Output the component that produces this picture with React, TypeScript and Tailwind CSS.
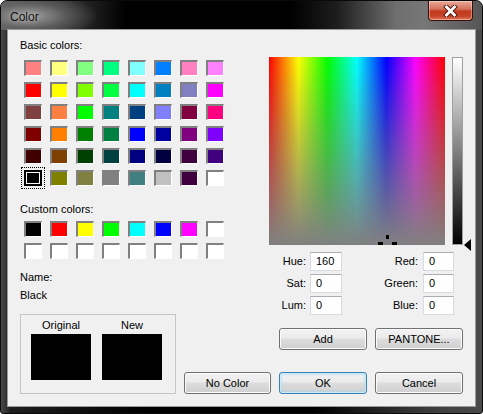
import React from "react";

const basicColors = [
  ["bg-[#ff8080]", "bg-[#ffff80]", "bg-[#80ff80]", "bg-[#00ff80]", "bg-[#80ffff]", "bg-[#0080ff]", "bg-[#ff80c0]", "bg-[#ff80ff]"],
  ["bg-[#ff0000]", "bg-[#ffff00]", "bg-[#80ff00]", "bg-[#00ff40]", "bg-[#00ffff]", "bg-[#0080c0]", "bg-[#8080c0]", "bg-[#ff00ff]"],
  ["bg-[#804040]", "bg-[#ff8040]", "bg-[#00ff00]", "bg-[#008080]", "bg-[#004080]", "bg-[#8080ff]", "bg-[#800040]", "bg-[#ff0080]"],
  ["bg-[#800000]", "bg-[#ff8000]", "bg-[#008000]", "bg-[#008040]", "bg-[#0000ff]", "bg-[#0000a0]", "bg-[#800080]", "bg-[#8000ff]"],
  ["bg-[#400000]", "bg-[#804000]", "bg-[#004000]", "bg-[#004040]", "bg-[#000080]", "bg-[#000040]", "bg-[#400040]", "bg-[#400080]"],
  ["bg-[#000000]", "bg-[#808000]", "bg-[#808040]", "bg-[#808080]", "bg-[#408080]", "bg-[#c0c0c0]", "bg-[#400040]", "bg-[#ffffff]"],
];

const customColors = [
  ["bg-[#000000]", "bg-[#ff0000]", "bg-[#ffff00]", "bg-[#00ff00]", "bg-[#00ffff]", "bg-[#0000ff]", "bg-[#ff00ff]", "bg-[#ffffff]"],
  ["bg-[#ffffff]", "bg-[#ffffff]", "bg-[#ffffff]", "bg-[#ffffff]", "bg-[#ffffff]", "bg-[#ffffff]", "bg-[#ffffff]", "bg-[#ffffff]"],
];

function Swatch({ color, selected }: { color: string; selected?: boolean }) {
  if (selected) {
    return (
      <div className="relative h-[16px] w-[18px]">
        <div className="absolute -inset-[3px] border border-dotted border-black" />
        <div className={`h-full w-full border-2 border-black shadow-[inset_0_0_0_1px_#ffffff] ${color}`} />
      </div>
    );
  }
  return (
    <div
      className={`h-[16px] w-[18px] border-t-2 border-l-2 border-r border-b border-t-[#808080] border-l-[#808080] border-r-white border-b-white ${color}`}
    />
  );
}

function SwatchGrid({ rows, selectFirstOfLast }: { rows: string[][]; selectFirstOfLast?: boolean }) {
  return (
    <div className="ml-[4px] grid grid-cols-[repeat(8,18px)] gap-x-[8px] gap-y-[6px]">
      {rows.map((row, r) =>
        row.map((c, i) => (
          <Swatch key={`${r}-${i}`} color={c} selected={selectFirstOfLast && r === rows.length - 1 && i === 0} />
        ))
      )}
    </div>
  );
}

function Field({ label, value, labelW, boxW }: { label: string; value: string; labelW: string; boxW: string }) {
  return (
    <>
      <div className={`${labelW} text-right leading-[19px]`}>{label}</div>
      <div className={`${boxW} h-[19px] border border-[#d8dbe0] border-t-[#abadb3] bg-white pl-[5px] leading-[17px]`}>
        {value}
      </div>
    </>
  );
}

const btn =
  "flex h-[22px] items-center justify-center rounded-[3px] border bg-[linear-gradient(to_bottom,#f2f2f2_0%,#ebebeb_45%,#dddddd_50%,#cfcfcf_100%)] text-[11px] text-black";

export default function App() {
  return (
    <div className="relative flex h-[414px] w-[483px] flex-col overflow-hidden rounded-t-[7px] rounded-b-[3px] border border-[#0a0a0a] bg-[linear-gradient(to_right,#4a4a4a,#1e1e1e_2%,#000_30%,#000_65%,#3a3a3a_88%,#4a4a4a)] font-['Liberation_Sans',Arial,sans-serif] text-[11px] text-black">
      {/* title bar */}
      <div className="flex h-[29px] items-start justify-between bg-[radial-gradient(ellipse_70px_22px_at_28px_15px,#a0a0a0,rgba(110,110,110,0.6)_55%,transparent_100%),linear-gradient(to_right,#5a5a5a_0%,#3a3a3a_12%,#000_26%,#000_60%,#1e1e1e_70%,#6e6e6e_82%,#777_88%,#555_100%)]">
        <div className="pl-[9px] pt-[9px] text-[12px] leading-[14px] text-[#111] [text-shadow:0_0_5px_rgba(255,255,255,0.55)]">
          Color
        </div>
        <div className="mr-[9px] flex h-[20px] w-[45px] items-center justify-center rounded-b-[4px] border border-t-0 border-[#3c0f0a] bg-[linear-gradient(to_bottom,#e9a898_0%,#d67560_40%,#c23a1e_55%,#c74428_80%,#e07a5c_100%)] shadow-[inset_0_0_0_1px_rgba(255,255,255,0.35)]">
          <svg width="15" height="12" viewBox="0 0 15 12">
            <path d="M3.5 2 L11.5 10 M11.5 2 L3.5 10" stroke="#4a140c" strokeWidth="4.6" strokeLinecap="square" />
            <path d="M3.5 2 L11.5 10 M11.5 2 L3.5 10" stroke="#ffffff" strokeWidth="2.8" strokeLinecap="square" />
          </svg>
        </div>
      </div>

      {/* client area */}
      <div className="mx-[7px] flex h-[376px] flex-col bg-[#f0f0f0] shadow-[0_0_0_1px_#9a9a9a]">
        <div className="flex h-[284px]">
          <div className="w-[228px] pl-[12px] pt-[8px]">
            <div className="leading-[14px]">Basic colors:</div>
            <div className="mt-[8px]">
              <SwatchGrid rows={basicColors} selectFirstOfLast />
            </div>
            <div className="mt-[16px] leading-[14px]">Custom colors:</div>
            <div className="mt-[5px]">
              <SwatchGrid rows={customColors} />
            </div>
            <div className="mt-[11px] leading-[14px]">Name:</div>
            <div className="mt-[4px] leading-[14px]">Black</div>
          </div>

          <div className="ml-[33px] pt-[27px]">
            <div className="flex gap-[7px]">
              <div className="relative h-[188px] w-[176px] bg-[linear-gradient(to_bottom,rgba(128,128,128,0),#808080),linear-gradient(to_right,#ff0000,#ffff00,#00ff00,#00ffff,#0000ff,#ff00ff,#ff0000)]">
                <div className="absolute left-[117px] top-[178px] h-[4px] w-[3px] bg-black" />
                <div className="absolute left-[109px] top-[185px] h-[3px] w-[5px] bg-black" />
                <div className="absolute left-[123px] top-[185px] h-[3px] w-[5px] bg-black" />
              </div>
              <div className="relative h-[188px] w-[11px] border border-[#a0a0a0] bg-[linear-gradient(to_bottom,#ffffff,#000000)]">
                <svg className="absolute left-[11px] top-[181px]" width="8" height="12" viewBox="0 0 8 12">
                  <path d="M7 0 L0 6 L7 12 Z" fill="#000" />
                </svg>
              </div>
            </div>
            <div className="mt-[7px] flex flex-col gap-[3px]">
              <div className="flex h-[19px]">
                <Field label="Hue:" value="160" labelW="w-[41px] pr-[4px]" boxW="w-[32px]" />
                <Field label="Red:" value="0" labelW="w-[81px] pr-[5px]" boxW="w-[31px]" />
              </div>
              <div className="flex h-[19px]">
                <Field label="Sat:" value="0" labelW="w-[41px] pr-[4px]" boxW="w-[32px]" />
                <Field label="Green:" value="0" labelW="w-[81px] pr-[5px]" boxW="w-[31px]" />
              </div>
              <div className="flex h-[19px]">
                <Field label="Lum:" value="0" labelW="w-[41px] pr-[4px]" boxW="w-[32px]" />
                <Field label="Blue:" value="0" labelW="w-[81px] pr-[5px]" boxW="w-[31px]" />
              </div>
            </div>
          </div>
        </div>

        <div className="flex">
          <div className="ml-[12px] h-[80px] w-[156px] border border-[#c5c5c5] pl-[10px] pt-[3px]">
            <div className="flex gap-[11px]">
              <div className="flex w-[60px] flex-col items-center">
                <div className="leading-[14px]">Original</div>
                <div className="mt-[2px] h-[46px] w-[60px] bg-black" />
              </div>
              <div className="flex w-[60px] flex-col items-center">
                <div className="leading-[14px]">New</div>
                <div className="mt-[2px] h-[46px] w-[60px] bg-black" />
              </div>
            </div>
          </div>

          <div className="ml-[8px] flex w-[279px] flex-col items-end">
            <div className="mt-[14px] flex gap-[8px]">
              <button className={`${btn} w-[88px] border-[#707070] shadow-[inset_0_0_0_1px_#fcfcfc]`}>Add</button>
              <button className={`${btn} w-[88px] border-[#707070] shadow-[inset_0_0_0_1px_#fcfcfc]`}>PANTONE...</button>
            </div>
            <div className="mt-[22px] flex gap-[8px]">
              <button className={`${btn} w-[87px] border-[#707070] shadow-[inset_0_0_0_1px_#fcfcfc]`}>No Color</button>
              <button className={`${btn} w-[88px] border-[#3c7fb1] shadow-[inset_0_0_0_1px_#c8ecfc,inset_0_0_3px_1px_#9fd8f5]`}>OK</button>
              <button className={`${btn} w-[88px] border-[#707070] shadow-[inset_0_0_0_1px_#fcfcfc]`}>Cancel</button>
            </div>
          </div>
        </div>
      </div>
    </div>
  );
}
